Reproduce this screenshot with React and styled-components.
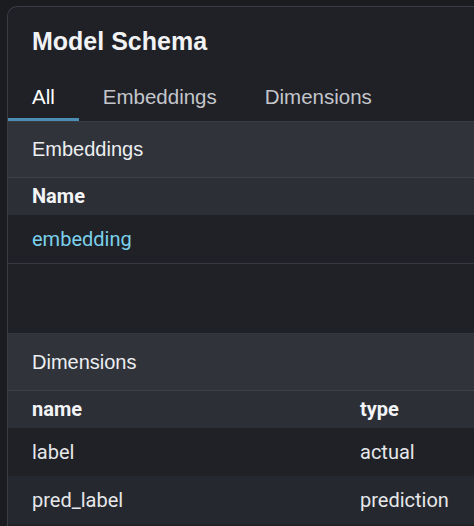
import React from 'react';
import styled, { createGlobalStyle } from 'styled-components';

const GlobalStyle = createGlobalStyle`
	html, body {
		margin: 0;
		background: #1b1c20;
		overflow: hidden;
	}
	body {
		font-family: "Liberation Sans", Arial, sans-serif;
	}
`;

const Page = styled.div`
	padding: 6px 0 0 7px;
`;

const Card = styled.div`
	margin-right: -20px;
	background: #1f2127;
	border: 1px solid #3a3d44;
	border-right: none;
	border-bottom: none;
	border-radius: 10px 0 0 0;
	min-height: 560px;
`;

const Title = styled.h1`
	margin: 0;
	padding: 19px 24px 0;
	font-size: 25px;
	line-height: 30px;
	font-weight: 700;
	color: #f1f2f4;
`;

const TabList = styled.div`
	display: flex;
	margin-top: 13px;
	border-bottom: 1px solid #3a3d44;
`;

const Tab = styled.button`
	background: none;
	border: none;
	border-bottom: 3px solid ${(p) => (p.active ? '#4b8db5' : 'transparent')};
	padding: 16px 24px 9px;
	font-family: "Liberation Sans", Arial, sans-serif;
	font-size: 20.5px;
	line-height: 24px;
	color: ${(p) => (p.active ? '#ffffff' : '#c4c6cb')};
	cursor: pointer;
`;

const Section = styled.section`
	padding-bottom: ${(p) => p.gap || 0}px;
`;

const SectionHeader = styled.div`
	background: #30333a;
	padding: ${(p) => (p.divider ? '16px 24px 16px' : '15px 24px 16px')};
	font-size: 20px;
	line-height: 24px;
	color: #eceef1;
	border-top: ${(p) => (p.divider ? '1px solid #34373e' : 'none')};
	border-bottom: 1px solid #3e4148;
`;

const Table = styled.table`
	width: 100%;
	table-layout: fixed;
	border-collapse: collapse;
	font-family: Roboto, "Liberation Sans", sans-serif;
	font-size: 20px;
	line-height: 24px;
`;

const NameCol = styled.col`
	width: ${(p) => p.width || 'auto'};
`;

const Th = styled.th`
	text-align: left;
	font-weight: 700;
	color: #f3f4f6;
	background: #2c2f36;
	padding: ${(p) => (p.first ? '6px 0 7px 24px' : '6px 0 7px 0')};
`;

const Row = styled.tr`
	background: ${(p) => (p.striped ? '#25282e' : '#1f2127')};
	border-bottom: ${(p) => (p.divided ? '1px solid #363940' : 'none')};
`;

const Td = styled.td`
	padding: ${(p) => (p.first ? '12px 0 12px 24px' : '12px 0')};
	color: #e6e7ea;
	white-space: nowrap;
`;

const Link = styled.a`
	color: #7cd0ea;
	text-decoration: none;
`;

const tabs = ['All', 'Embeddings', 'Dimensions'];

const dimensions = [
	{ name: 'label', type: 'actual' },
	{ name: 'pred_label', type: 'prediction' },
];

const App = () => {
	return (
		<>
			<GlobalStyle />
			<Page>
				<Card>
					<Title>Model Schema</Title>
					<TabList>
						{tabs.map((t, i) => (
							<Tab key={t} type="button" active={i === 0}>
								{t}
							</Tab>
						))}
					</TabList>

					<Section gap={69}>
						<SectionHeader>Embeddings</SectionHeader>
						<Table>
							<thead>
								<tr>
									<Th first>Name</Th>
								</tr>
							</thead>
							<tbody>
								<Row divided>
									<Td first>
										<Link href="#">embedding</Link>
									</Td>
								</Row>
							</tbody>
						</Table>
					</Section>

					<Section>
						<SectionHeader divider>Dimensions</SectionHeader>
						<Table>
							<colgroup>
								<NameCol width="352px" />
								<NameCol />
							</colgroup>
							<thead>
								<tr>
									<Th first>name</Th>
									<Th>type</Th>
								</tr>
							</thead>
							<tbody>
								{dimensions.map((d, i) => (
									<Row key={d.name} striped={i % 2 === 1}>
										<Td first>{d.name}</Td>
										<Td>{d.type}</Td>
									</Row>
								))}
							</tbody>
						</Table>
					</Section>
				</Card>
			</Page>
		</>
	);
};

export default App;
